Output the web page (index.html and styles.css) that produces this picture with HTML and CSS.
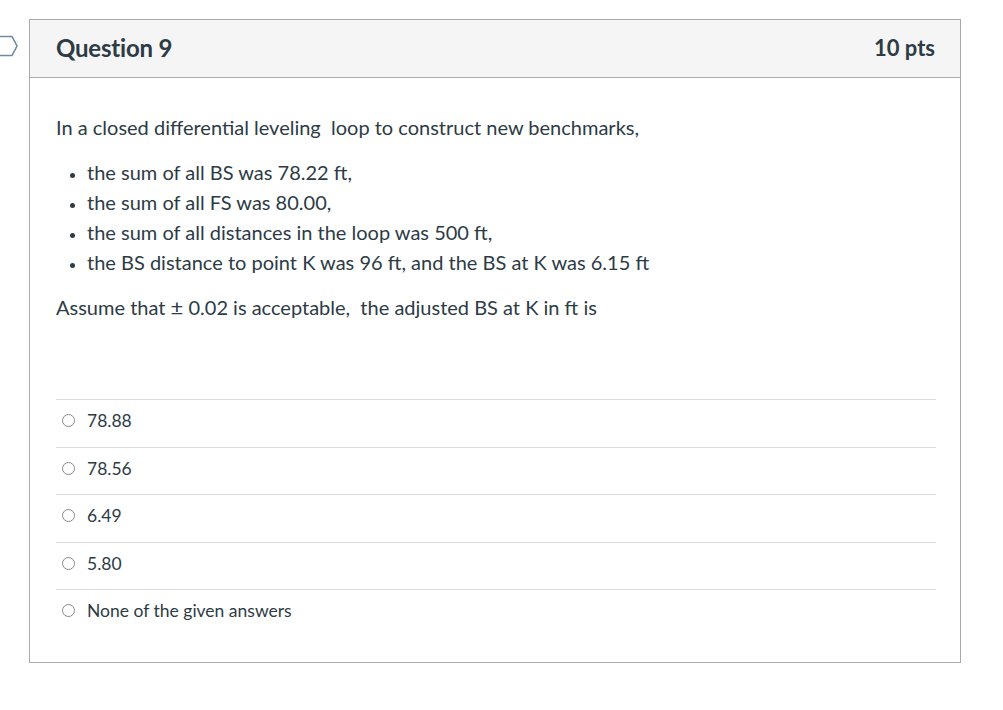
FILE: index.html
```html
<!DOCTYPE html>
<html>
<head>
<meta charset="utf-8">
<link rel="stylesheet" href="styles.css">
</head>
<body>
<div class="wrap">
  <svg class="flag" width="20" height="24" viewBox="0 0 20 24"><path d="M-4 1.5 H12 L17 11 L12 20.5 H-4" fill="none" stroke="#6f8aa6" stroke-width="1.6"/></svg>
  <div class="panel">
    <div class="head">
      <span class="title">Question 9</span>
      <span class="pts">10 pts</span>
    </div>
    <div class="body">
      <p class="lead">In a closed differential leveling&nbsp; loop to construct new benchmarks,</p>
      <ul class="list">
        <li>the sum of all BS was 78.22 ft,</li>
        <li>the sum of all FS was 80.00,</li>
        <li>the sum of all distances in the loop was 500 ft,</li>
        <li>the BS distance to point K was 96 ft, and the BS at K was 6.15 ft</li>
      </ul>
      <p class="ask">Assume that <span class="pm">±</span> 0.02 is acceptable,&nbsp; the adjusted BS at K in ft is</p>
      <div class="answers">
        <label class="ans"><span class="radio"></span>78.88</label>
        <label class="ans"><span class="radio"></span>78.56</label>
        <label class="ans"><span class="radio"></span>6.49</label>
        <label class="ans"><span class="radio"></span>5.80</label>
        <label class="ans"><span class="radio"></span>None of the given answers</label>
      </div>
    </div>
  </div>
</div>
</body>
</html>
```
FILE: styles.css
```css
html, body { margin: 0; padding: 0; background: #fff; }
body { font-family: Lato, "Open Sans", sans-serif; color: #2d3b45; }
.wrap { position: relative; padding: 19px 0 0 29px; width: 932px; }
.flag { position: absolute; left: 0; top: 35px; }
.panel { border: 1px solid #aaaaaa; width: 930px; }
.head {
  background: #f5f5f5;
  border-bottom: 1px solid #aaaaaa;
  height: 57px;
  display: flex;
  align-items: center;
  justify-content: space-between;
  padding: 0 25px 0 26px;
}
.title { font-size: 24px; font-weight: 700; letter-spacing: -0.2px; margin-top: -2px; }
.pts { font-size: 22px; font-weight: 700; color: #2d3b45; margin-top: -2px; }
.body { padding: 36px 24px 25px 26px; }
.lead { margin: 0; font-size: 20px; line-height: 27px; }
.list { margin: 16px 0 0 0; padding: 0 0 0 31px; font-size: 20px; line-height: 30px; }
.list li::marker { font-size: 16px; }
.ask { margin: 15px 0 0 0; font-size: 20px; line-height: 30px; }
.pm { font-size: 22px; }
.answers { margin-top: 77px; }
.ans {
  display: flex;
  align-items: center;
  height: 47.5px;
  border-top: 1px solid #dddddd;
  font-size: 17.5px;
  padding: 0 0 5px 6px;
  box-sizing: border-box;
}
.radio {
  width: 11px; height: 11px;
  border: 1.5px solid #888;
  border-radius: 50%;
  margin-right: 12px;
  flex: none;
}
```
